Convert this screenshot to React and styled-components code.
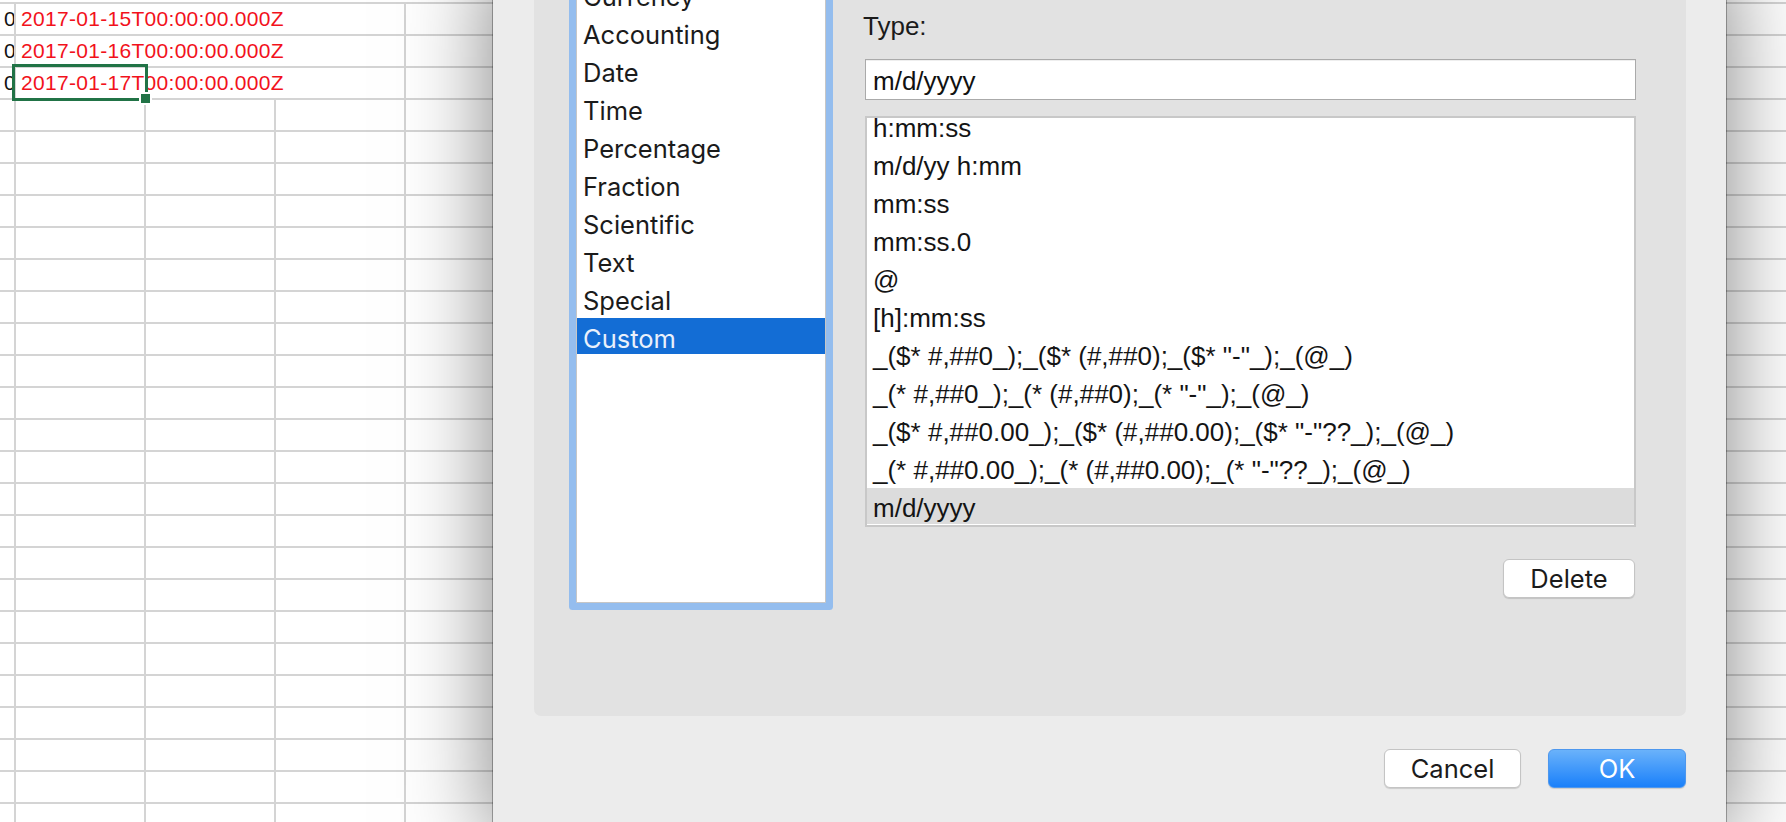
import React from 'react';
import styled, { createGlobalStyle } from 'styled-components';

const GlobalStyle = createGlobalStyle`
  html, body {
    margin: 0;
    padding: 0;
  }
  body {
    width: 1786px;
    height: 822px;
    overflow: hidden;
    background: #fff;
    font-family: Inter, "Liberation Sans", sans-serif;
  }
`;

const Screen = styled.div`
  display: flex;
  width: 1786px;
  height: 822px;
  overflow: hidden;
  background: #fff;
`;

const Sheet = styled.div`
  position: relative;
  flex: 0 0 ${(p) => p.$width}px;
  overflow: hidden;
  padding-top: 2px;
  background: #fff;
`;

const SheetRow = styled.div`
  display: flex;
  height: 32px;
  box-sizing: border-box;
  border-top: 2px solid #d4d4d4;
`;

const Cell = styled.div`
  flex: 0 0 ${(p) => p.$width}px;
  box-sizing: border-box;
  border-right: 2px solid #d4d4d4;
  padding: 0 ${(p) => (p.$align === 'right' ? 4 : 5)}px;
  text-align: ${(p) => p.$align || 'left'};
  font-family: "Liberation Sans", Arial, sans-serif;
  font-size: 21px;
  letter-spacing: 0.3px;
  line-height: 30px;
  white-space: nowrap;
  overflow: hidden;
  color: ${(p) => (p.$red ? '#f2121c' : '#111')};
`;

const Selection = styled.div`
  position: absolute;
  left: 12px;
  top: 64px;
  width: 136px;
  height: 37px;
  box-sizing: border-box;
  border: 3px solid #217346;
  pointer-events: none;
`;

const FillHandle = styled.div`
  position: absolute;
  right: -7px;
  bottom: -7px;
  width: 9px;
  height: 9px;
  background: #217346;
  border: 2px solid #fff;
`;

const Dialog = styled.div`
  position: relative;
  z-index: 1;
  flex: 0 0 1233px;
  margin-top: -40px;
  height: 880px;
  box-sizing: border-box;
  padding: 0 40px 0 41px;
  background: #ececec;
  box-shadow: 0 0 0 1px rgba(0, 0, 0, 0.3), 0 0 85px 0 rgba(0, 0, 0, 0.5);
  display: flex;
  flex-direction: column;
`;

const GroupBox = styled.div`
  display: flex;
  height: 756px;
  box-sizing: border-box;
  padding: 0 50px 0 42px;
  background: #e2e2e2;
  border-radius: 0 0 7px 7px;
`;

const CategoryBox = styled.div`
  flex: 0 0 250px;
  margin-top: 13px;
  height: 630px;
  box-sizing: border-box;
  padding-top: 2px;
  background: #fff;
  border: 1px solid #c6c6c6;
  border-radius: 1px;
  box-shadow: 0 0 0 7px #94bdee;
  overflow: hidden;
`;

const CategoryItem = styled.div`
  height: 36px;
  margin-bottom: 2px;
  padding-left: 6px;
  font-family: Inter, "Liberation Sans", sans-serif;
  font-size: 25.5px;
  line-height: 41px;
  white-space: nowrap;
  color: ${(p) => (p.$selected ? '#e9f0fb' : '#1b1b1b')};
  background: ${(p) => (p.$selected ? '#136dd5' : 'transparent')};
`;

const TypePane = styled.div`
  flex: 1;
  margin-left: 39px;
  padding-top: 50px;
  display: flex;
  flex-direction: column;
`;

const Label = styled.div`
  font-family: "Liberation Sans", Arial, sans-serif;
  font-size: 26px;
  line-height: 32px;
  color: #1b1b1b;
  margin-left: -2px;
`;

const TypeField = styled.div`
  margin-top: 17px;
  height: 41px;
  box-sizing: border-box;
  padding: 3px 0 0 7px;
  background: #fff;
  border: 1px solid #aaaaaa;
  box-shadow: inset 0 1px 0 #eeeeee;
  font-family: "Liberation Sans", Arial, sans-serif;
  font-size: 26px;
  line-height: 36px;
  color: #111;
`;

const FormatList = styled.div`
  margin-top: 16px;
  height: 411px;
  box-sizing: border-box;
  background: #fff;
  border: 2px solid #c8c8c8;
  overflow: hidden;
`;

const FormatScroll = styled.div`
  margin-top: -10px;
`;

const FormatItem = styled.div`
  height: ${(p) => (p.$selected ? 36 : 38)}px;
  padding-left: 6px;
  font-family: "Liberation Sans", Arial, sans-serif;
  font-size: 26px;
  line-height: 40px;
  white-space: nowrap;
  color: #141414;
  background: ${(p) => (p.$selected ? '#dcdcdc' : 'transparent')};
`;

const Button = styled.button`
  width: ${(p) => p.$width}px;
  height: 39px;
  box-sizing: border-box;
  padding: 0;
  border-radius: 6px;
  font-family: Inter, "Liberation Sans", sans-serif;
  font-size: 25.5px;
  color: ${(p) => (p.$primary ? '#fff' : '#1b1b1b')};
  background: ${(p) =>
    p.$primary ? 'linear-gradient(#6ab2fa, #1a80fa)' : '#fff'};
  border: 1px solid ${(p) => (p.$primary ? '#4d97ee' : '#c4c4c4')};
  box-shadow: 0 1px 1px rgba(0, 0, 0, 0.14);
`;

const DeleteRow = styled.div`
  display: flex;
  justify-content: flex-end;
  margin-top: 32px;
  padding-right: 1px;
`;

const Footer = styled.div`
  display: flex;
  justify-content: flex-end;
  gap: 27px;
  margin-top: 33px;
`;

const categories = [
  'Currency',
  'Accounting',
  'Date',
  'Time',
  'Percentage',
  'Fraction',
  'Scientific',
  'Text',
  'Special',
  'Custom',
];

const formats = [
  'h:mm:ss',
  'm/d/yy h:mm',
  'mm:ss',
  'mm:ss.0',
  '@',
  '[h]:mm:ss',
  '_($* #,##0_);_($* (#,##0);_($* "-"_);_(@_)',
  '_(* #,##0_);_(* (#,##0);_(* "-"_);_(@_)',
  '_($* #,##0.00_);_($* (#,##0.00);_($* "-"??_);_(@_)',
  '_(* #,##0.00_);_(* (#,##0.00);_(* "-"??_);_(@_)',
  'm/d/yyyy',
];

const dates = [
  '2017-01-15T00:00:00.000Z',
  '2017-01-16T00:00:00.000Z',
  '2017-01-17T00:00:00.000Z',
];

const SheetLeft = () => (
  <Sheet $width={493}>
    {dates.map((d) => (
      <SheetRow key={d}>
        <Cell $width={16} $align="right">0</Cell>
        <Cell $width={390} $red>{d}</Cell>
        <Cell $width={130} />
      </SheetRow>
    ))}
    {Array.from({ length: 23 }).map((_, i) => (
      <SheetRow key={i}>
        <Cell $width={16} />
        <Cell $width={130} />
        <Cell $width={130} />
        <Cell $width={130} />
        <Cell $width={130} />
      </SheetRow>
    ))}
    <Selection>
      <FillHandle />
    </Selection>
  </Sheet>
);

const SheetRight = () => (
  <Sheet $width={60}>
    {Array.from({ length: 26 }).map((_, i) => (
      <SheetRow key={i} />
    ))}
  </Sheet>
);

export default function App() {
  return (
    <Screen>
      <GlobalStyle />
      <SheetLeft />
      <Dialog>
        <GroupBox>
          <CategoryBox>
            {categories.map((c) => (
              <CategoryItem key={c} $selected={c === 'Custom'}>
                {c}
              </CategoryItem>
            ))}
          </CategoryBox>
          <TypePane>
            <Label>Type:</Label>
            <TypeField>m/d/yyyy</TypeField>
            <FormatList>
              <FormatScroll>
                {formats.map((f) => (
                  <FormatItem key={f} $selected={f === 'm/d/yyyy'}>
                    {f}
                  </FormatItem>
                ))}
              </FormatScroll>
            </FormatList>
            <DeleteRow>
              <Button $width={132}>Delete</Button>
            </DeleteRow>
          </TypePane>
        </GroupBox>
        <Footer>
          <Button $width={137}>Cancel</Button>
          <Button $width={138} $primary>OK</Button>
        </Footer>
      </Dialog>
      <SheetRight />
    </Screen>
  );
}
